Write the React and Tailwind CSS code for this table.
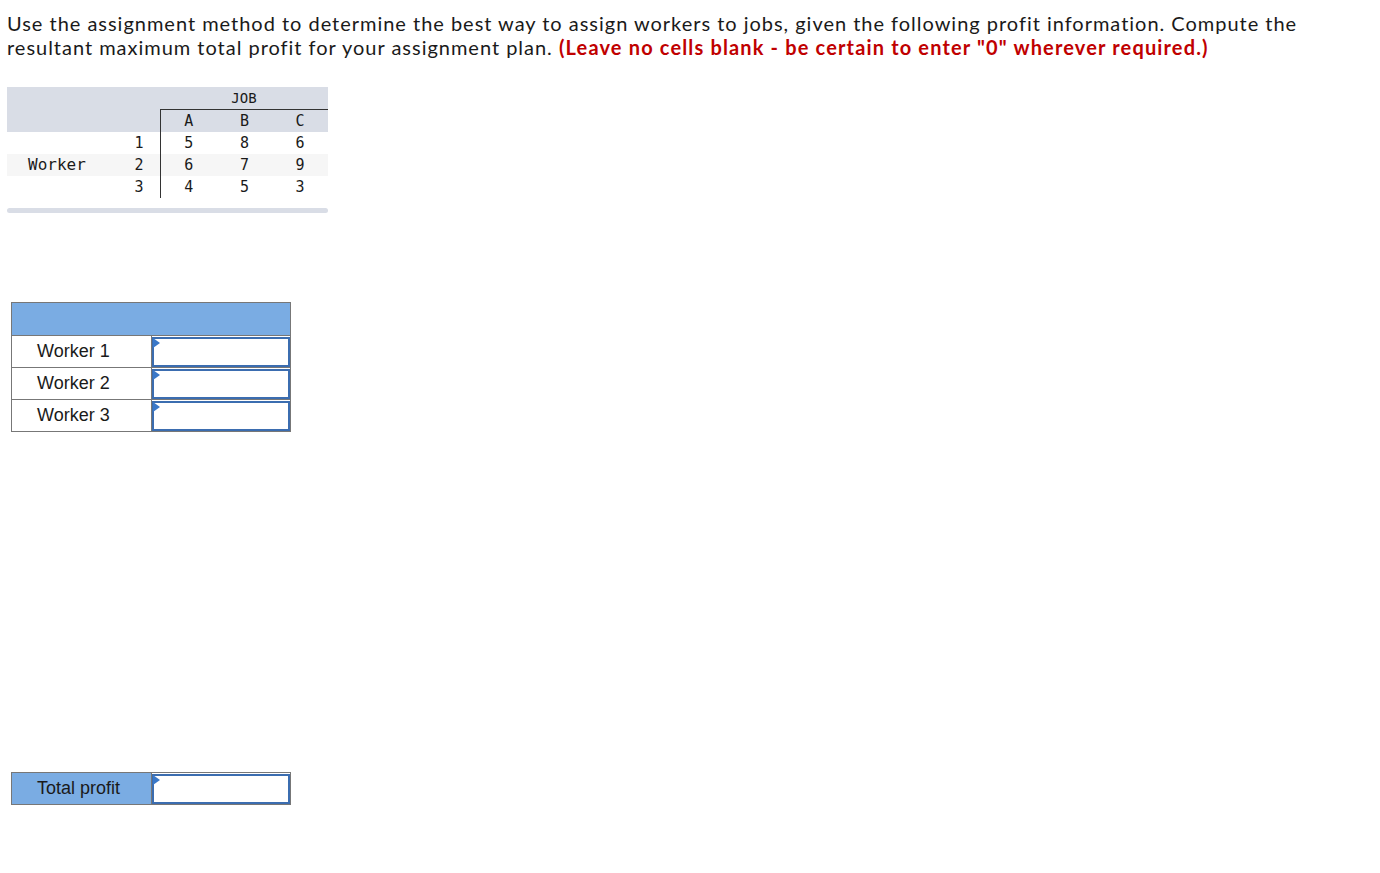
import React from "react";

const mono = { fontFamily: '"DejaVu Sans Mono", "Liberation Mono", monospace' };

function InputCell() {
  return (
    <td className="p-0 border border-[#777]">
      <div className="relative h-[30px] border-2 border-[#3b6db0] bg-white">
        <span className="absolute -left-[1px] -top-[1px] w-0 h-0 border-t-[5px] border-b-[5px] border-l-[7px] border-t-transparent border-b-transparent border-l-[#3a78c8]" />
      </div>
    </td>
  );
}

export default function App() {
  const rows = [
    ["", "1", "5", "8", "6"],
    ["Worker", "2", "6", "7", "9"],
    ["", "3", "4", "5", "3"],
  ];
  return (
    <div className="bg-white min-h-[873px] w-[1380px] text-[#1a1a1a]" style={{ fontFamily: 'Lato, "Open Sans", sans-serif' }}>
      <p className="pl-[7px] pt-[11px] text-[20px] leading-[24px] tracking-[0.98px]">
        Use the assignment method to determine the best way to assign workers to jobs, given the following profit information. Compute the
        <br />
        resultant maximum total profit for your assignment plan.{" "}
        <b className="text-[#c00000] tracking-[1.15px]">(Leave no cells blank - be certain to enter "0" wherever required.)</b>
      </p>

      <div className="ml-[7px] mt-[28px] w-[321px]" style={mono}>
        <table className="border-collapse text-[15px] leading-[22px] w-[321px]">
          <colgroup>
            <col className="w-[113px]" />
            <col className="w-[40px]" />
            <col className="w-[57px]" />
            <col className="w-[55px]" />
            <col className="w-[56px]" />
          </colgroup>
          <thead className="bg-[#d9dde6]">
            <tr className="h-[22px]">
              <th colSpan={2} className="font-normal p-0"></th>
              <th colSpan={3} className="font-normal p-0 text-[14px] text-center border-b border-[#333]">JOB</th>
            </tr>
            <tr className="h-[22px]">
              <th colSpan={2} className="font-normal p-0"></th>
              <th className="font-normal p-0 text-center border-l border-[#333]">A</th>
              <th className="font-normal p-0 text-center">B</th>
              <th className="font-normal p-0 text-center">C</th>
            </tr>
          </thead>
          <tbody>
            {rows.map((r, i) => (
              <tr key={i} className={i === 1 ? "h-[22px] bg-[#f6f6f6]" : "h-[22px]"}>
                <td className="p-0 pl-[21px] text-[16px]">{r[0]}</td>
                <td className="p-0 pr-[16px] text-right">{r[1]}</td>
                <td className="p-0 text-center border-l border-[#333]">{r[2]}</td>
                <td className="p-0 text-center">{r[3]}</td>
                <td className="p-0 text-center">{r[4]}</td>
              </tr>
            ))}
          </tbody>
        </table>
        <div className="mt-[10px] h-[5px] rounded-full bg-[#d9dde6]" />
      </div>

      <div className="ml-[11px] mt-[89px]" style={{ fontFamily: '"Liberation Sans", Arial, sans-serif' }}>
        <table className="border-collapse text-[18px] w-[280px]">
          <colgroup>
            <col className="w-[140px]" />
            <col className="w-[140px]" />
          </colgroup>
          <thead>
            <tr className="h-[33px]">
              <th colSpan={2} className="bg-[#7aace3] border border-[#777]"></th>
            </tr>
          </thead>
          <tbody>
            {["Worker 1", "Worker 2", "Worker 3"].map((w) => (
              <tr key={w} className="h-[32px]">
                <td className="p-0 pl-[25px] border border-[#777]">{w}</td>
                <InputCell />
              </tr>
            ))}
          </tbody>
        </table>

        <table className="border-collapse text-[18px] w-[280px] mt-[340px]">
          <colgroup>
            <col className="w-[140px]" />
            <col className="w-[140px]" />
          </colgroup>
          <tbody>
            <tr className="h-[32px]">
              <td className="p-0 pl-[25px] bg-[#7aace3] border border-[#777]">Total profit</td>
              <InputCell />
            </tr>
          </tbody>
        </table>
      </div>
    </div>
  );
}
